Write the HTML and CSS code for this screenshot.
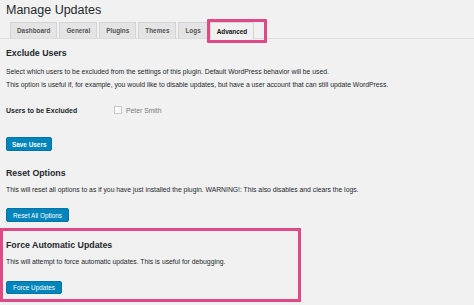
FILE: index.html
```html
<!DOCTYPE html>
<html lang="en">
<head>
    <meta charset="UTF-8">
    <title>Manage Updates</title>
    <link rel="stylesheet" href="styles.css">
</head>
<body>
    <div class="wrap">
        <h1>Manage Updates</h1>

        <nav class="tabs">
            <a class="tab">Dashboard</a>
            <a class="tab">General</a>
            <a class="tab">Plugins</a>
            <a class="tab">Themes</a>
            <a class="tab">Logs</a>
            <a class="tab active marked">Advanced</a>
        </nav>

        <div class="section">
            <h2>Exclude Users</h2>
            <p class="first">Select which users to be excluded from the settings of this plugin. Default WordPress behavior will be used.</p>
            <p>This option is useful if, for example, you would like to disable updates, but have a user account that can still update WordPress.</p>
            <div class="field">
                <label class="field-label">Users to be Excluded</label>
                <label class="check"><span class="box"></span>Peter Smith</label>
            </div>
            <button class="btn btn-save">Save Users</button>
        </div>

        <div class="section">
            <h2>Reset Options</h2>
            <p class="first">This will reset all options to as if you have just installed the plugin. WARNING!: This also disables and clears the logs.</p>
            <button class="btn">Reset All Options</button>
        </div>

        <div class="section highlight">
            <h2>Force Automatic Updates</h2>
            <p class="first">This will attempt to force automatic updates. This is useful for debugging.</p>
            <button class="btn">Force Updates</button>
        </div>
    </div>
</body>
</html>
```

FILE: styles.css
```css
body {
    margin: 0;
    background-color: #f1f1f1;
    color: #23282d;
    font-family: "Liberation Sans", Arial, sans-serif;
}

.wrap {
    padding: 3px 0 0 6px;
}

h1 {
    margin: 0;
    font-size: 12.5px;
    font-weight: 400;
    line-height: 15px;
}

.tabs {
    display: flex;
    gap: 2px;
    margin: 4px -6px 0 -6px;
    padding-left: 10px;
    border-bottom: 1px solid #dcdcdc;
    height: 16px;
}

.tab {
    display: flex;
    align-items: center;
    padding: 0 6px;
    height: 15px;
    background-color: #e4e4e4;
    border: 1px solid #d4d4d4;
    border-bottom: none;
    color: #555;
    font-size: 6.4px;
    font-weight: bold;
}

.tab.active {
    background-color: #f1f1f1;
    color: #111;
    height: 16px;
}

.marked {
    position: relative;
}

/* pink annotation round the active tab */
.marked::after {
    content: "";
    position: absolute;
    left: -4px;
    top: -4px;
    width: 54px;
    height: 18px;
    border: 3px solid #df4a86;
    border-radius: 1px;
}

h2 {
    margin: 0;
    font-size: 8.8px;
    font-weight: bold;
    line-height: 12px;
}

p {
    margin: 0;
    font-size: 6.8px;
    line-height: 8px;
    margin-top: 5px;
}

p.first {
    margin-top: 7px;
}

.section {
    padding-top: 16px;
}

.section:first-of-type {
    padding-top: 8px;
}

.section:first-of-type p.first {
    margin-top: 9px;
}

.field {
    display: flex;
    align-items: center;
    margin-top: 16px;
    height: 10px;
}

.field-label {
    width: 108px;
    font-size: 7px;
    font-weight: bold;
}

.check {
    display: flex;
    align-items: center;
    gap: 4px;
    color: #7a7a7a;
    font-size: 6.8px;
}

.box {
    width: 6px;
    height: 6px;
    border: 1px solid #c8c8c8;
    background-color: #fafafa;
}

.btn {
    display: block;
    margin-top: 14px;
    height: 14px;
    padding: 0 6px;
    background-color: #0085ba;
    border: 1px solid #0073aa;
    border-radius: 2px;
    color: #fff;
    font-family: "Liberation Sans", Arial, sans-serif;
    font-size: 6.4px;
}

.btn-save {
    margin-top: 22px;
    padding: 0 5px;
    font-weight: bold;
}

.highlight {
    margin: 6px 0 0 -6px;
    width: 292px;
    padding: 0 0 5px 3px;
    border: 3px solid #df4a86;
}

.section.highlight {
    padding-top: 8px;
}

.highlight p.first {
    margin-top: 7px;
}

.highlight .btn {
    margin-top: 15px;
    height: 13px;
}
```
